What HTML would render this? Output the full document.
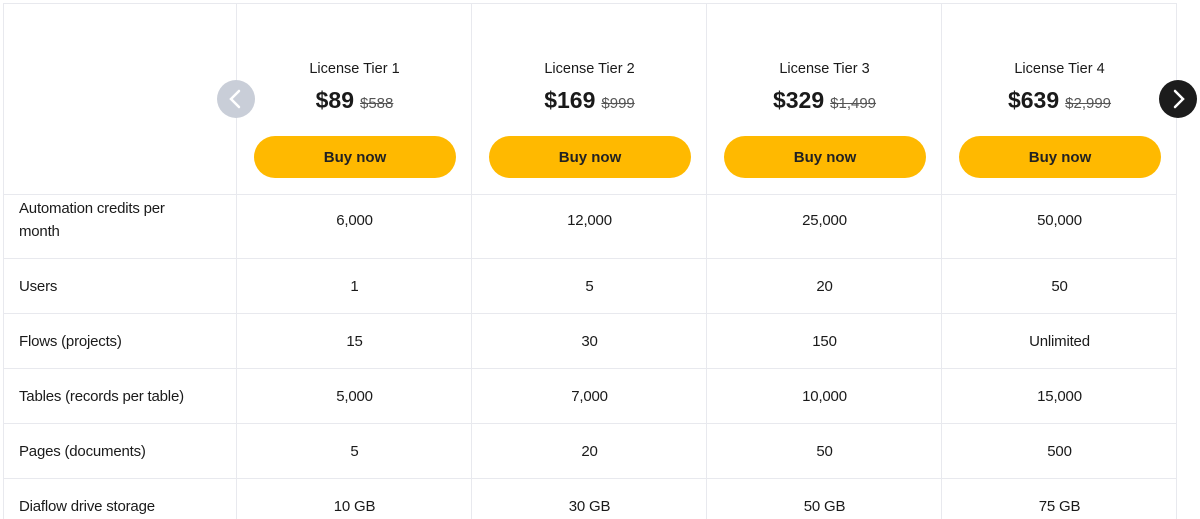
<!DOCTYPE html>
<html><head><style>
body{margin:0;width:1200px;height:519px;overflow:hidden;background:#fff;font-family:"Liberation Sans",Arial,sans-serif;color:#1a1a1a;position:relative}
.v{position:absolute;top:3px;bottom:0;width:1px;background:#e8e9ee}
.h{position:absolute;left:3px;width:1174px;height:1px;background:#e8e9ee}
.c{position:absolute;width:235px;text-align:center;font-size:15px;letter-spacing:-0.2px}
.l{position:absolute;left:19px;font-size:15px;line-height:23px;letter-spacing:-0.2px}
.t{position:absolute;width:235px;text-align:center}
.tt{top:61px;font-size:14.5px}
.pr{top:87px;font-size:23px;font-weight:bold}
.pr s{font-size:15px;font-weight:normal;color:#555;margin-left:6px}
.b{position:absolute;top:136px;width:202px;height:42px;border-radius:21px;background:#ffb900;text-align:center;line-height:44px;font-size:15px;font-weight:bold;color:#222}
.arr{position:absolute;width:38px;height:38px;border-radius:50%}
</style></head><body>
<div class="h" style="top:3px"></div>
<div class="v" style="left:3px"></div><div class="v" style="left:236px"></div><div class="v" style="left:471px"></div><div class="v" style="left:706px"></div><div class="v" style="left:941px"></div><div class="v" style="left:1176px"></div>
<div class="h" style="top:194px"></div><div class="h" style="top:258px"></div><div class="h" style="top:313px"></div><div class="h" style="top:368px"></div><div class="h" style="top:423px"></div><div class="h" style="top:478px"></div>

<div class="t tt" style="left:237px">License Tier 1</div><div class="t pr" style="left:237px">$89<s>$588</s></div><div class="b" style="left:254px">Buy now</div>
<div class="t tt" style="left:472px">License Tier 2</div><div class="t pr" style="left:472px">$169<s>$999</s></div><div class="b" style="left:489px">Buy now</div>
<div class="t tt" style="left:707px">License Tier 3</div><div class="t pr" style="left:707px">$329<s>$1,499</s></div><div class="b" style="left:724px">Buy now</div>
<div class="t tt" style="left:942px">License Tier 4</div><div class="t pr" style="left:942px">$639<s>$2,999</s></div><div class="b" style="left:959px">Buy now</div>

<div class="arr" style="left:217px;top:80px;background:#c9ced8"><svg width="38" height="38"><path d="M22 11 L14 19 L22 27" stroke="#fff" stroke-width="2.5" fill="none" stroke-linecap="round"/></svg></div>
<div class="arr" style="left:1159px;top:80px;background:#1c1c1c"><svg width="38" height="38"><path d="M16 11 L24 19 L16 27" stroke="#fff" stroke-width="2.5" fill="none" stroke-linecap="round"/></svg></div>

<div class="l" style="top:197px">Automation credits per<br>month</div>
<div class="l" style="top:275px">Users</div>
<div class="l" style="top:330px">Flows (projects)</div>
<div class="l" style="top:385px">Tables (records per table)</div>
<div class="l" style="top:440px">Pages (documents)</div>
<div class="l" style="top:495px">Diaflow drive storage</div>

<div class="c" style="left:237px;top:212px">6,000</div><div class="c" style="left:472px;top:212px">12,000</div><div class="c" style="left:707px;top:212px">25,000</div><div class="c" style="left:942px;top:212px">50,000</div>
<div class="c" style="left:237px;top:278px">1</div><div class="c" style="left:472px;top:278px">5</div><div class="c" style="left:707px;top:278px">20</div><div class="c" style="left:942px;top:278px">50</div>
<div class="c" style="left:237px;top:333px">15</div><div class="c" style="left:472px;top:333px">30</div><div class="c" style="left:707px;top:333px">150</div><div class="c" style="left:942px;top:333px">Unlimited</div>
<div class="c" style="left:237px;top:388px">5,000</div><div class="c" style="left:472px;top:388px">7,000</div><div class="c" style="left:707px;top:388px">10,000</div><div class="c" style="left:942px;top:388px">15,000</div>
<div class="c" style="left:237px;top:443px">5</div><div class="c" style="left:472px;top:443px">20</div><div class="c" style="left:707px;top:443px">50</div><div class="c" style="left:942px;top:443px">500</div>
<div class="c" style="left:237px;top:498px">10 GB</div><div class="c" style="left:472px;top:498px">30 GB</div><div class="c" style="left:707px;top:498px">50 GB</div><div class="c" style="left:942px;top:498px">75 GB</div>
</body></html>
